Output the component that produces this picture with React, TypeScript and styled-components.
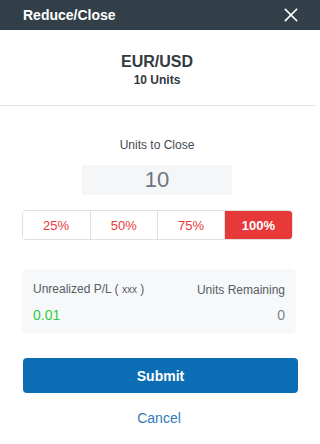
import React, { useState } from "react";
import styled, { createGlobalStyle } from "styled-components";

const GlobalStyle = createGlobalStyle`
  html, body {
    margin: 0;
    padding: 0;
    background: #ffffff;
    font-family: "Liberation Sans", Arial, sans-serif;
  }
`;

const options = [25, 50, 75, 100];

const App = () => {
  const [selected, setSelected] = useState(100);

  return (
    <>
      <GlobalStyle />
      <Page>
        <Header>
          <Title>Reduce/Close</Title>
          <CloseButton aria-label="Close">
            <svg width="14" height="14" viewBox="0 0 14 14">
              <path
                d="M1.5 1.5 L12.5 12.5 M12.5 1.5 L1.5 12.5"
                stroke="#ffffff"
                strokeWidth="1.7"
                strokeLinecap="square"
              />
            </svg>
          </CloseButton>
        </Header>

        <Instrument>
          <Pair>EUR/USD</Pair>
          <Units>10 Units</Units>
        </Instrument>
        <Divider />

        <Body>
          <Label>Units to Close</Label>
          <UnitsInput>10</UnitsInput>
          <ButtonGroup>
            {options.map((o) => (
              <PercentButton
                key={o}
                $active={selected === o}
                onClick={() => setSelected(o)}
              >
                {o}%
              </PercentButton>
            ))}
          </ButtonGroup>

          <InfoCard>
            <InfoRow>
              <InfoLabel>
                Unrealized P/L ( <Small>xxx</Small> )
              </InfoLabel>
              <InfoLabel>Units Remaining</InfoLabel>
            </InfoRow>
            <InfoRow>
              <Value $color="#2ecc40">0.01</Value>
              <Value $color="#7a838c">0</Value>
            </InfoRow>
          </InfoCard>

          <SubmitButton>Submit</SubmitButton>
          <CancelLink>Cancel</CancelLink>
        </Body>
      </Page>
    </>
  );
};

export default App;

const Page = styled.div`
  width: 320px;
  height: 444px;
  background: #ffffff;
  display: flex;
  flex-direction: column;
`;

const Header = styled.div`
  height: 30px;
  background: #333f48;
  display: flex;
  align-items: center;
  justify-content: space-between;
  padding: 0 22px 0 23px;
`;

const Title = styled.div`
  color: #ffffff;
  font-size: 14px;
  font-weight: 700;
`;

const CloseButton = styled.div`
  display: flex;
  align-items: center;
  justify-content: center;
  width: 14px;
  height: 14px;
`;

const Instrument = styled.div`
  width: 314px;
  display: flex;
  flex-direction: column;
  align-items: center;
  padding-top: 23px;
  height: 52px;
`;

const Pair = styled.div`
  font-size: 16px;
  font-weight: 700;
  color: #333a40;
  line-height: 18px;
`;

const Units = styled.div`
  font-size: 12px;
  font-weight: 700;
  color: #333a40;
  margin-top: 2px;
  line-height: 14px;
`;

const Divider = styled.div`
  width: 316px;
  height: 1px;
  background: #e6e6e6;
`;

const Body = styled.div`
  width: 314px;
  display: flex;
  flex-direction: column;
  align-items: center;
  padding-top: 32px;
`;

const Label = styled.div`
  font-size: 12px;
  color: #444b52;
  line-height: 14px;
`;

const UnitsInput = styled.div`
  margin-top: 13px;
  width: 150px;
  height: 30px;
  background: #f5f6f8;
  color: #6b7580;
  font-size: 22px;
  display: flex;
  align-items: center;
  justify-content: center;
`;

const ButtonGroup = styled.div`
  margin-top: 15px;
  width: 271px;
  height: 30px;
  display: grid;
  grid-template-columns: repeat(4, 1fr);
  border: 1px solid #e0e0e0;
  border-radius: 4px;
  overflow: hidden;
  box-sizing: border-box;
`;

const PercentButton = styled.div<{ $active: boolean }>`
  display: flex;
  align-items: center;
  justify-content: center;
  font-size: 13px;
  font-weight: ${(p) => (p.$active ? 700 : 400)};
  color: ${(p) => (p.$active ? "#ffffff" : "#e8393a")};
  background: ${(p) => (p.$active ? "#e8393a" : "#ffffff")};
  border-left: 1px solid #e0e0e0;
  cursor: pointer;

  &:first-child {
    border-left: none;
  }
`;

const InfoCard = styled.div`
  margin-top: 29px;
  margin-left: 4px;
  width: 274px;
  height: 65px;
  box-sizing: border-box;
  background: #f7f8fa;
  border-radius: 5px;
  padding: 13px 11px 0 11px;
  display: flex;
  flex-direction: column;
  gap: 10px;
`;

const InfoRow = styled.div`
  display: flex;
  justify-content: space-between;
  align-items: center;
`;

const InfoLabel = styled.div`
  font-size: 12px;
  color: #555c63;
  line-height: 14px;
`;

const Small = styled.span`
  font-size: 10px;
`;

const Value = styled.div<{ $color: string }>`
  font-size: 14px;
  color: ${(p) => p.$color};
  line-height: 16px;
`;

const SubmitButton = styled.div`
  margin-top: 24px;
  margin-left: 7px;
  width: 275px;
  height: 35px;
  background: #0b6db3;
  border-radius: 4px;
  color: #ffffff;
  font-size: 14px;
  font-weight: 700;
  display: flex;
  align-items: center;
  justify-content: center;
  cursor: pointer;
`;

const CancelLink = styled.div`
  margin-top: 17px;
  margin-left: 4px;
  color: #2e7bb8;
  font-size: 14px;
  line-height: 16px;
  cursor: pointer;
`;
